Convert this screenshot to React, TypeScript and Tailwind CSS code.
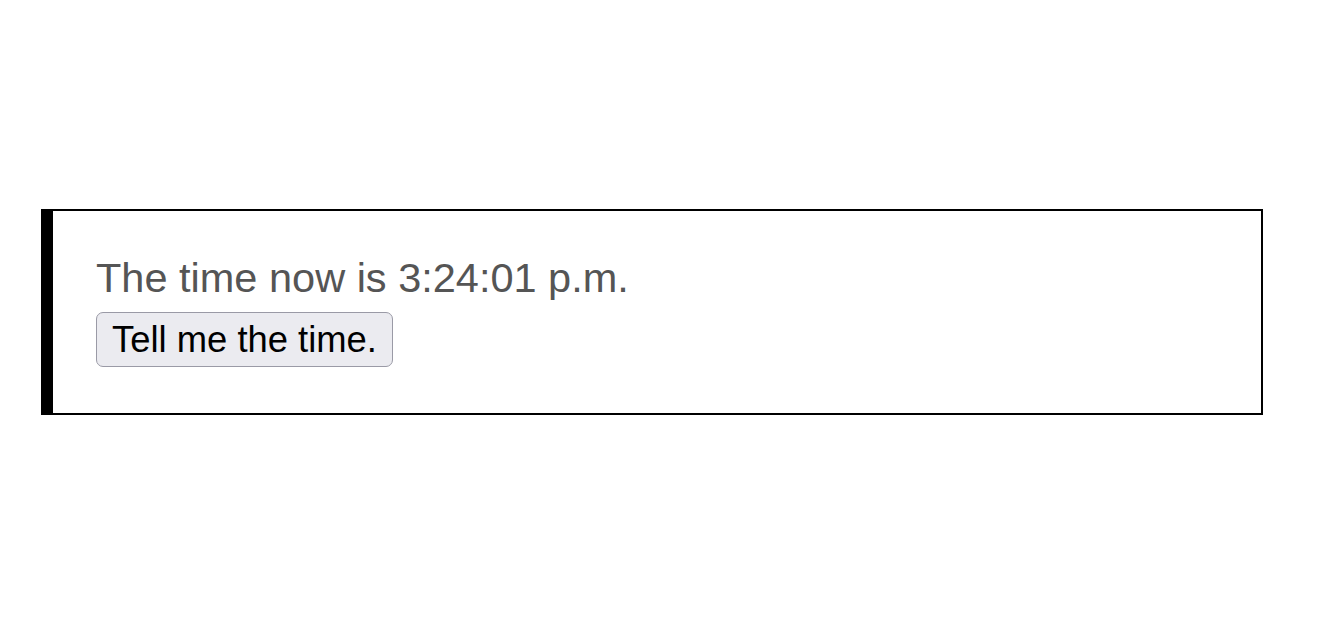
export default function App() {
  return (
    <div className="w-[1317px] h-[630px] bg-white pt-[209px] pl-[41px]" style={{ fontFamily: '"Liberation Sans", Arial, sans-serif' }}>
      <div className="w-[1222px] border-2 border-l-[12px] border-black pl-[43px] pt-[43px] pb-[46px]">
        <p className="text-[41.5px] leading-[48px] text-[#555555]">The time now is 3:24:01 p.m.</p>
        <button className="block mt-[10px] h-[55px] px-[15px] text-[36.4px] leading-[41px] text-black bg-[#ebebf0] border border-[#9a9aa6] rounded-[7px]">
          Tell me the time.
        </button>
      </div>
    </div>
  );
}
